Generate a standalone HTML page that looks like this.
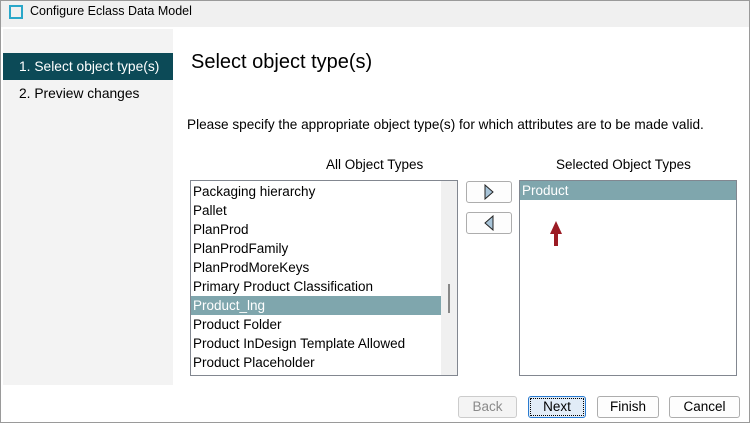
<!DOCTYPE html>
<html><head><style>
*{margin:0;padding:0;box-sizing:border-box}
body{width:750px;height:423px;background:#fff;font-family:"Liberation Sans",sans-serif;font-size:13px;color:#000;position:relative;overflow:hidden}
.abs{position:absolute}
.win{left:0;top:0;width:750px;height:423px;border:1px solid #9a9a9a}
.tb{left:1px;top:1px;width:748px;height:26px;background:#f0f0f0}
.side{left:3px;top:29px;width:170px;height:356px;background:#f3f3f3}
.sel{left:3px;top:53px;width:170px;height:27px;background:#0c4a57;color:#fff;padding:6px 0 0 16px;font-size:13.8px}
.list{border:1px solid #828790;background:#fff}
.item{position:absolute;left:2px;height:19px;line-height:19px;font-size:13.5px;white-space:nowrap}
.btn{position:absolute;border:1px solid #adadad;background:#fdfdfd;border-radius:3px;text-align:center;line-height:20px;font-size:13.5px}
</style></head><body>
<div class="abs win"></div>
<div class="abs tb"></div>
<div class="abs" style="left:9px;top:5px;width:14px;height:14px;border:2px solid #2aa7c9"></div>
<div class="abs" style="left:30px;top:4px;font-size:12.5px">Configure Eclass Data Model</div>
<div class="abs side"></div>
<div class="abs sel">1. Select object type(s)</div>
<div class="abs" style="left:19px;top:86px;font-size:13.8px">2. Preview changes</div>
<div class="abs" style="left:191px;top:51px;font-size:20px">Select object type(s)</div>
<div class="abs" style="left:187px;top:117px;font-size:13.6px">Please specify the appropriate object type(s) for which attributes are to be made valid.</div>
<div class="abs" style="left:326px;top:157px;font-size:13.5px">All Object Types</div>
<div class="abs" style="left:556px;top:157px;font-size:13.5px">Selected Object Types</div>
<div class="abs list" style="left:190px;top:180px;width:268px;height:196px">
<div class="abs" style="left:250px;top:0;width:16px;height:194px;background:#f0f0f0"></div>
<div class="abs" style="left:257px;top:103px;width:2px;height:29px;background:#888"></div>
<div class="item" style="top:1px">Packaging hierarchy</div>
<div class="item" style="top:20px">Pallet</div>
<div class="item" style="top:39px">PlanProd</div>
<div class="item" style="top:58px">PlanProdFamily</div>
<div class="item" style="top:77px">PlanProdMoreKeys</div>
<div class="item" style="top:96px">Primary Product Classification</div>
<div class="item" style="top:115px;left:0;width:250px;background:#7fa6ad;color:#fff;padding-left:2px">Product_lng</div>
<div class="item" style="top:134px">Product Folder</div>
<div class="item" style="top:153px">Product InDesign Template Allowed</div>
<div class="item" style="top:172px">Product Placeholder</div>
</div>
<div class="btn" style="left:466px;top:181px;width:46px;height:22px"><svg width="12" height="16" style="margin-top:2px" viewBox="0 0 12 16"><path d="M2 1 L10 8 L2 15 Z" fill="#a8c4d8" stroke="#222"/></svg></div>
<div class="btn" style="left:466px;top:212px;width:46px;height:22px"><svg width="12" height="16" style="margin-top:2px" viewBox="0 0 12 16"><path d="M10 1 L2 8 L10 15 Z" fill="#a8c4d8" stroke="#222"/></svg></div>
<div class="abs list" style="left:519px;top:180px;width:218px;height:196px">
<div class="item" style="top:0;left:0;width:216px;background:#7fa6ad;color:#fff;padding-left:2px">Product</div>
</div>
<svg class="abs" style="left:548px;top:220px" width="16" height="26"><path d="M8 1 L14 14 L10 14 L10 26 L6 26 L6 14 L2 14 Z" fill="#9b1b24"/></svg>
<div class="btn" style="left:458px;top:396px;width:59px;height:22px;color:#8a8a8a;background:#f4f4f4;border-color:#ccc">Back</div>
<div class="btn" style="left:528px;top:396px;width:58px;height:22px;background:#e1ecf7;border:1px solid #2a7bd0;outline:1px dotted #000;outline-offset:-3px">Next</div>
<div class="btn" style="left:597px;top:396px;width:62px;height:22px">Finish</div>
<div class="btn" style="left:669px;top:396px;width:71px;height:22px">Cancel</div>
</body></html>
